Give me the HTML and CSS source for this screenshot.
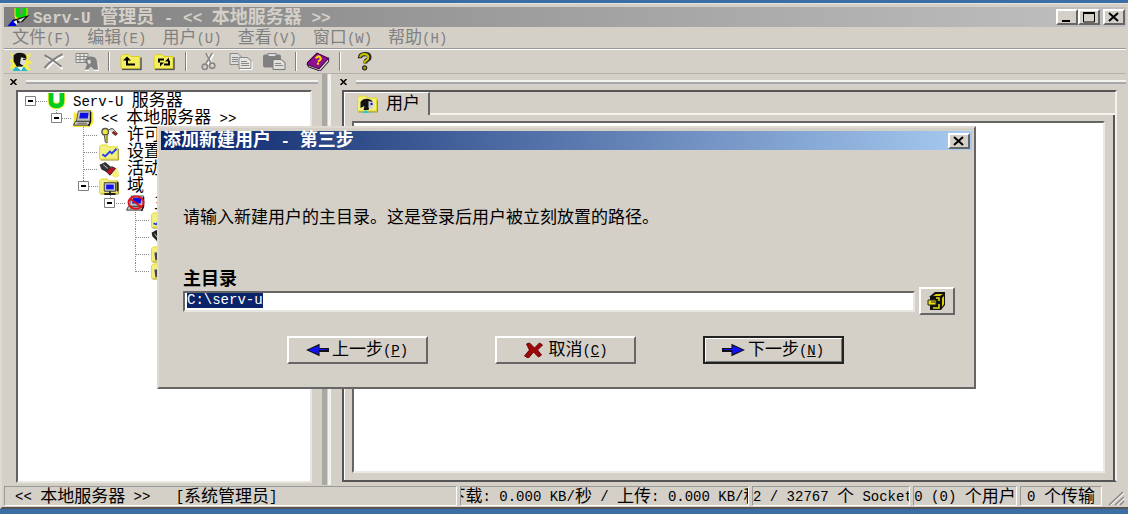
FILE: index.html
```html
<!DOCTYPE html>
<html lang="zh-CN">
<head>
<meta charset="utf-8">
<title>Serv-U 管理员</title>
<link rel="stylesheet" href="styles.css">
</head>
<body>
<svg width="0" height="0" class="defs" aria-hidden="true">
  <symbol id="folder" viewBox="0 0 22 18"><path d="M1 16V4l2-2h6l2 2h9v12z" fill="#f4ee60" stroke="#d8d020"/><path d="M2 17h19V5" fill="none" stroke="#555" stroke-width="1.5"/></symbol>
  <symbol id="folder-flat" viewBox="0 0 22 18"><path d="M1 16V3l2-2h6l2 2h9v13z" fill="#f4f080" stroke="#e0d820"/><path d="M2 17h19V5" fill="none" stroke="#a09820"/></symbol>
  <symbol id="cross" viewBox="0 0 10 8"><path d="M1 0l8 8M9 0L1 8" stroke="#000" stroke-width="2"/></symbol>
  <symbol id="pc" viewBox="0 0 22 18"><path d="M6 1h13v11H4z" fill="#c0c0c0" stroke="#555"/><path d="M8 3h9l-1 6H7z" fill="#1010e0"/><path d="M3 12h16l-2 4H1z" fill="#d0d0c0" stroke="#333"/><path d="M19 2v10l-2 5" fill="none" stroke="#111" stroke-width="1.5"/><path d="M5 14h10" stroke="#555"/></symbol>
</svg>
<div class="window">
  <header class="titlebar">
    <svg class="app-icon" viewBox="0 0 22 18"><path d="M9 0v8q1 3 4 3t5-3V0" fill="none" stroke="#ee0" stroke-width="4"/><path d="M10 0v7q3 4 7 0V0" fill="none" stroke="#0d0" stroke-width="4"/><path d="M5 12l17-5-7 7-6 1z" fill="#111"/><path d="M10 12l8-3-5 5z" fill="#ddd"/><path d="M0 18l6-7 3 7z" fill="#00d"/><path d="M6 14l3-2 1 5z" fill="#fff"/></svg>
    <h1><span class="m">Serv-U </span>管理员<span class="m"> - &lt;&lt; </span>本地服务器<span class="m"> &gt;&gt;</span></h1>
    <div class="controls">
      <button class="cap" aria-label="最小化"><svg viewBox="0 0 18 12"><path d="M4 10h8" stroke="#000" stroke-width="2"/></svg></button>
      <button class="cap" aria-label="最大化"><svg viewBox="0 0 18 12"><path d="M3 2h12" stroke="#000" stroke-width="2"/><path d="M3.500 2v9h11V2" fill="none" stroke="#000"/></svg></button>
      <button class="cap cap-close" aria-label="关闭"><svg viewBox="0 0 18 12"><path d="M4 2l9 8M13 2l-9 8" stroke="#000" stroke-width="2"/></svg></button>
    </div>
  </header>
  <nav class="menu">
    <button>文件<span class="m">(F)</span></button>
    <button>编辑<span class="m">(E)</span></button>
    <button>用户<span class="m">(U)</span></button>
    <button>查看<span class="m">(V)</span></button>
    <button>窗口<span class="m">(W)</span></button>
    <button>帮助<span class="m">(H)</span></button>
  </nav>
  <div class="toolbar">
    <button aria-label="新建用户"><svg viewBox="0 0 22 18"><path d="M0 0l6 4 4-4 4 4 7-3-4 6 5 3-5 2 4 6-8-3-4 3-3-4-6 3 3-6-3-3 4-2z" fill="#f6ef40"/><path d="M4 3q3-3 8-2 5 1 4 6l-3 3-1 4H7L4 9z" fill="#111"/><path d="M11 5l4 1 1 4-3 3-3-2z" fill="#ddd"/><path d="M13 7h2M10 13h3" stroke="#111"/><path d="M3 18l3-4 4 2 4-2 3 4z" fill="#20b8c8"/><path d="M8 14l3 4 2-4z" fill="#fff"/></svg></button>
    <button aria-label="删除"><svg viewBox="0 0 22 18"><path d="M3 4q8 4 15 11M19 3Q9 7 3 15" fill="none" stroke="#fff" stroke-width="2" transform="translate(1 1)"/><path d="M2 3q8 4 16 11M19 2Q9 7 2 15" fill="none" stroke="#808080" stroke-width="2"/></svg></button>
    <button aria-label="复制用户"><svg viewBox="0 0 24 18"><path d="M1 1h12v9H1zM5 1v9M9 1v9M1 4h12M1 7h12" fill="#e8e6e0" stroke="#888"/><path d="M10 9q0-5 6-5 6 0 6 6l1 7h-4l-3-3-3 3h-3l2-5z" fill="#808080"/><path d="M12 8l3-1 1 3-2 2z" fill="#ddd"/><path d="M24 10v8h-5M14 18h-4" fill="none" stroke="#fff"/></svg></button>
    <i class="sep"></i>
    <button aria-label="上级"><svg viewBox="0 0 24 18"><use href="#folder" width="24" height="18"/><path d="M8 6v6h8" fill="none" stroke="#000" stroke-width="2"/><path d="M4 8l4-4 4 4z"/></svg></button>
    <button aria-label="刷新"><svg viewBox="0 0 24 18"><use href="#folder" width="24" height="18"/><path d="M7 10V7h5M17 8v4h-5" fill="none" stroke="#000" stroke-width="2"/><path d="M13 9l4-4v4zM12 10l-4 4v-4z"/></svg></button>
    <i class="sep"></i>
    <button aria-label="剪切"><svg viewBox="0 0 22 18"><path d="M10 2l5 10M16 2l-6 10" fill="none" stroke="#fff" stroke-width="2"/><path d="M9 1l5 10M15 1L9 11" fill="none" stroke="#888" stroke-width="1.500"/><circle cx="8" cy="14" r="2.500" fill="none" stroke="#888" stroke-width="1.500"/><circle cx="15" cy="13" r="2.500" fill="none" stroke="#888" stroke-width="1.500"/></svg></button>
    <button aria-label="复制"><svg viewBox="0 0 24 18"><path d="M1 1h8l3 3v8H1z" fill="#ddd" stroke="#888"/><path d="M3 5h6M3 7h6M3 9h6" stroke="#888"/><path d="M10 5h8l4 3v8H10z" fill="#e6e4de" stroke="#888"/><path d="M12 9h6M12 11h8M12 13h8" stroke="#888"/><path d="M23 9v8H11" fill="none" stroke="#fff"/></svg></button>
    <button aria-label="粘贴"><svg viewBox="0 0 24 18"><rect x="1" y="2" width="18" height="13" rx="2" fill="#808080"/><path d="M6 4V1h8v3z" fill="#ddd" stroke="#808080"/><path d="M11 7h8l4 3v7H11z" fill="#e0ded8" stroke="#777"/><path d="M13 11h6M13 13h8" stroke="#888"/></svg></button>
    <i class="sep"></i>
    <button aria-label="帮助主题"><svg viewBox="0 0 22 18"><path d="M1 10l9-9 11 5-9 10-11-4z" fill="#901090" stroke="#400040"/><path d="M1 12l11 4 9-10v3l-8 9-11-4z" fill="#eee" stroke="#402040"/><path d="M9 6q2-3 4-1t-2 4" fill="none" stroke="#fd0" stroke-width="2"/><path d="M10 11h2" stroke="#fd0" stroke-width="2"/></svg></button>
    <i class="sep"></i>
    <button aria-label="关于"><svg viewBox="0 0 22 18"><path d="M9 6q0-4 5-4 4 0 4 3 0 2-3 3-1 1-1 3" fill="none" stroke="#222" stroke-width="4"/><path d="M9 5q1-3 4-3 4 0 4 3 0 2-2 3-2 1-2 3" fill="none" stroke="#c8c000" stroke-width="2"/><circle cx="13.500" cy="15" r="2" fill="#a09800" stroke="#222"/></svg></button>
  </div>
  <main class="panes">
    <section class="pane pane-left">
      <div class="grip-head"><button aria-label="关闭面板"><svg viewBox="0 0 10 8"><use href="#cross"/></svg></button><i></i></div>
      <ul class="tree">
        <li><svg class="g1" viewBox="0 0 27 17"><path d="M16 8.500h11" class="dots"/><path d="M5.500 3.500h10v9h-10z" class="box"/><path d="M8 8h5" class="dash"/></svg><svg class="u" viewBox="0 0 19 17"><path d="M4 0v8q0 5 5.500 5T15 8V0" fill="none" stroke="#ee2" stroke-width="6"/><path d="M4 0v8q0 5 5.500 5T15 8V0" fill="none" stroke="#0c2" stroke-width="4.500"/></svg><span><span class="m">Serv-U </span>服务器</span></li>
        <li><svg class="g2" viewBox="0 0 52 17"><path d="M36.500 0v4M42 8.500h10" class="dots"/><path d="M31.500 3.500h10v9h-10z" class="box"/><path d="M34 8h5" class="dash"/></svg><svg class="ico" viewBox="0 0 22 18"><path d="M1 2l4 2 3-4h12l2 3v11l-4 4H0l1-6z" fill="#f4e840"/><use href="#pc"/></svg><span><span class="m">&lt;&lt; </span>本地服务器<span class="m"> &gt;&gt;</span></span></li>
        <li><svg class="g3" viewBox="0 0 78 17"><path d="M63.500 0v17M64 8.500h14" class="dots"/></svg><svg class="ico" viewBox="0 0 22 18"><circle cx="7" cy="5" r="3.500" fill="#eee840" stroke="#555" stroke-width="1.500"/><path d="M6 8h3v9l-2-1z" fill="#d8d020" stroke="#555"/><path d="M11 3q4-3 6 1l3 3-2 2-4-3" fill="#ddd" stroke="#333"/><path d="M15 5l4 3" stroke="#a00" stroke-width="2"/></svg><span>许可</span></li>
        <li><svg class="g3" viewBox="0 0 78 17"><path d="M63.500 0v17M64 8.500h14" class="dots"/></svg><svg class="ico" viewBox="0 0 22 18"><use href="#folder-flat"/><path d="M4 11l3 2 5-5 2 2 5-5" fill="none" stroke="#24e" stroke-width="2"/></svg><span>设置</span></li>
        <li><svg class="g3" viewBox="0 0 78 17"><path d="M63.500 0v17M64 8.500h14" class="dots"/></svg><svg class="ico" viewBox="0 0 22 18"><path d="M13 15l7-8 2 9-4 2z" fill="#f6ef80"/><path d="M1 4l6-3 6 5-4 6-6-3z" fill="#333"/><path d="M5 4l5 4" stroke="#ccc"/><path d="M8 11l6-5 4 2-6 7z" fill="#c01020" stroke="#222"/></svg><span>活动</span></li>
        <li><svg class="g3" viewBox="0 0 78 17"><path d="M63.500 0v4M69 8.500h9" class="dots"/><path d="M58.500 3.500h10v9h-10z" class="box"/><path d="M61 8h5" class="dash"/></svg><svg class="ico" viewBox="0 0 22 18"><use href="#folder-flat"/><path d="M6 5h12v9H6z" fill="#c8c8c8" stroke="#333"/><path d="M8 7h8v5H8z" fill="#11e"/><path d="M12 14v3M6 17h12M20 4v10" stroke="#222" stroke-width="2"/></svg><span>域</span></li>
        <li><svg class="g4" viewBox="0 0 105 17"><path d="M90.500 0v4M96 8.500h9" class="dots"/><path d="M84.500 3.500h10v9h-10z" class="box"/><path d="M87 8h5" class="dash"/></svg><svg class="ico" viewBox="0 0 22 18"><use href="#pc"/><ellipse cx="11" cy="8" rx="8" ry="6.500" fill="none" stroke="#e01020" stroke-width="2"/><path d="M5 4l12 9" stroke="#e01020" stroke-width="2"/></svg><span>主</span></li>
        <li><svg class="g5" viewBox="0 0 130 17"><path d="M115.500 0v17M116 8.500h14" class="dots"/></svg><svg class="ico" viewBox="0 0 22 18"><use href="#folder-flat"/><path d="M3 12l3 1 6-6" fill="none" stroke="#24e" stroke-width="2"/></svg></li>
        <li><svg class="g5" viewBox="0 0 130 17"><path d="M115.500 0v17M116 8.500h14" class="dots"/></svg><svg class="ico" viewBox="0 0 22 18"><path d="M1 4l5-3 8 4v8l-6 3-2-4-4-4z" fill="#222"/><path d="M4 5l4 5" stroke="#ccc"/></svg></li>
        <li><svg class="g5" viewBox="0 0 130 17"><path d="M115.500 0v17M116 8.500h14" class="dots"/></svg><svg class="ico" viewBox="0 0 22 18"><use href="#folder-flat"/><path d="M4 7h10v8H5z" fill="#445"/></svg></li>
        <li><svg class="g5" viewBox="0 0 130 17"><path d="M115.500 0v9M116 8.500h14" class="dots"/></svg><svg class="ico" viewBox="0 0 22 18"><use href="#folder-flat"/><path d="M4 7h10v8H5z" fill="#445"/></svg></li>
      </ul>
    </section>
    <div class="splitter"></div>
    <section class="pane pane-right">
      <div class="grip-head"><button aria-label="关闭面板"><svg viewBox="0 0 10 8"><use href="#cross"/></svg></button><i></i></div>
      <div class="frame">
        <div class="tabs">
          <button class="tab"><svg class="ico" viewBox="0 0 22 18"><use href="#folder-flat"/><path d="M4 7q3-4 8-3 5 1 4 5l-3 3-1 3H7l1-4-4 2z" fill="#111"/><path d="M12 6l4 1 2 3-2 1v3l-4-1z" fill="#ccd"/><path d="M14 9h2" stroke="#11c" stroke-width="2"/><path d="M6 18l3-3 4 3z" fill="#2cc"/></svg>用户</button>
          <i class="tabs-rest"></i>
        </div>
        <div class="tab-page"><div class="list"></div></div>
      </div>
    </section>
  </main>
  <footer class="status">
    <div class="cell cell-main"><span class="m">&lt;&lt; </span>本地服务器<span class="m"> &gt;&gt;   [</span>系统管理员<span class="m">]</span></div>
    <div class="cell cell-speed">下载<span class="m">: 0.000 KB/</span>秒<span class="m"> / </span>上传<span class="m">: 0.000 KB/</span>秒</div>
    <div class="cell cell-socket"><span class="m">2 / 32767 </span>个<span class="m"> Socket</span></div>
    <div class="cell cell-users"><span class="m">0 (0) </span>个用户</div>
    <div class="cell cell-transfer"><span class="m">0 </span>个传输</div>
    <svg class="resize" viewBox="0 0 18 16"><path d="M1 15L15 2M7 15l9-8M12 15l4-4" stroke="#888" stroke-width="1.500"/><path d="M3 15L16 3M9 15l8-7" stroke="#fff"/></svg>
  </footer>
</div>
<form class="dialog" role="dialog" aria-labelledby="dialog-title">
  <header class="dialog-title">
    <h2 id="dialog-title">添加新建用户<span class="m"> - </span>第三步</h2>
    <button type="button" class="cap" aria-label="关闭"><svg viewBox="0 0 18 12"><path d="M4 2l9 8M13 2l-9 8" stroke="#000" stroke-width="2"/></svg></button>
  </header>
  <div class="dialog-body">
    <p>请输入新建用户的主目录。这是登录后用户被立刻放置的路径。</p>
    <label for="home">主目录</label>
    <div class="field">
      <input id="home" type="text" value="C:\serv-u" spellcheck="false">
      <button type="button" class="push browse" aria-label="浏览"><svg viewBox="0 0 20 18"><path d="M2 5l6-5h10v13l-4 5H3V5z" fill="#111"/><path d="M6 4l3-2h7l-3 2zM15 6l2-2v8l-2 3z" fill="#d8d010"/><path d="M1 8h8v5H1z" fill="#e8e010" stroke="#222"/><path d="M4 10h4" stroke="#222"/><path d="M9 6h3v3M6 16h6v-4" stroke="#e8e010" stroke-width="1.500" fill="none"/></svg></button>
    </div>
    <div class="actions">
      <button type="button" class="push"><svg viewBox="0 0 22 14"><path d="M0 7l13-6v4h9v4h-9v4z" fill="#111"/><path d="M2 7l10-4v8zM12 6h8v1h-8z" fill="#11f"/></svg><span>上一步<span class="m">(<u>P</u>)</span></span></button>
      <button type="button" class="push"><svg viewBox="0 0 22 16"><path d="M4 2l3-1 5 5 5-5 3 2-5 5 4 5-3 2-5-5-5 6-4-2 5-6z" fill="#a00808" stroke="#600"/></svg><span>取消<span class="m">(<u>C</u>)</span></span></button>
      <button type="submit" class="push default"><svg viewBox="0 0 22 14"><path d="M22 7L9 1v4H0v4h9v4z" fill="#111"/><path d="M20 7L10 3v8zM10 6H2v1h8z" fill="#11f"/></svg><span>下一步<span class="m">(<u>N</u>)</span></span></button>
    </div>
  </div>
</form>
<script src="app.js"></script>
</body>
</html>
```
FILE: styles.css
```css
* { box-sizing: border-box; }
:root {
  --face: #d4d0c8;
  --light: #f4f2ec;
  --shade: #808080;
  --dark: #555;
}
body {
  margin: 0;
  min-height: 100vh;
  display: flex;
  flex-direction: column;
  padding: 3px 0 5px;
  background: #3a6ea5;
  color: #000;
  font: 17px/17px "Liberation Mono", "Noto Sans CJK SC", monospace;
  overflow: hidden;
}
.defs { position: absolute; }
svg { display: block; flex: none; }
button {
  font: inherit;
  color: inherit;
  margin: 0;
  padding: 0;
  border: 0;
  background: none;
}
.m { font-size: 14px; white-space: pre; }
h1, h2, p { margin: 0; white-space: nowrap; }
h1, h2 { font-size: 18px; line-height: 18px; }
h1 .m, h2 .m { font-size: 16px; }
p { font-size: 17px; }

.window {
  flex: 1;
  display: flex;
  flex-direction: column;
  background: var(--face);
  border-top: 1px solid #e8e4dc;
  border-left: 2px solid #dedad2;
  border-bottom: 2px solid var(--dark);
  padding: 3px 2px 0 2px;
}
.titlebar {
  display: flex;
  align-items: center;
  height: 20px;
  padding: 0 1px 0 3px;
  background: linear-gradient(90deg, #808080, #c0c0c0);
  color: var(--face);
}
.titlebar h1 { padding-top: 3px; }
.app-icon { width: 23px; height: 18px; margin-right: 3px; }
.controls { display: flex; margin-left: auto; }
.cap {
  width: 22px;
  height: 16px;
  background: var(--face);
  border: 2px solid;
  border-color: #fff #666 #666 #fff;
}
.cap svg { width: 18px; height: 12px; }
.cap-close { margin-left: 3px; }

.menu {
  display: flex;
  gap: 16px;
  height: 22px;
  padding: 2px 8px 0;
  align-items: center;
  color: var(--shade);
  border-bottom: 1px solid #999;
}
.toolbar {
  display: flex;
  align-items: center;
  gap: 9px;
  height: 25px;
  padding: 0 5px;
  border-top: 1px solid #fff;
  border-bottom: 1px solid #b4b1aa;
}
.toolbar svg { width: 24px; height: 19px; }
.sep { width: 2px; height: 19px; border-left: 1px solid var(--shade); border-right: 1px solid #fff; }

.panes { flex: 1; display: flex; }
.pane { display: flex; flex-direction: column; }
.pane-left { width: 314px; }
.pane-right { flex: 1; }
.splitter { width: 12px; margin-left: 4px; border-left: 5px solid #aaa8a4; border-right: 3px solid var(--face); background: linear-gradient(90deg, var(--face) 1px, var(--light) 1px); }
.grip-head { display: flex; align-items: center; gap: 8px; height: 16px; padding-left: 5px; }
.grip-head svg { width: 9px; height: 6px; }
.grip-head i { flex: 1; height: 4px; border-top: 2px solid var(--light); border-bottom: 2px solid #a8a8ac; }
.tree {
  flex: 1;
  margin: 0 6px 2px 12px;
  padding: 1px 0 0 2px;
  list-style: none;
  background: #fff;
  border: 2px solid;
  border-color: #606060 #e8e6e0 #e8e6e0 #606060;
}
.tree li { display: flex; height: 17px; align-items: center; white-space: nowrap; }
.tree .g1, .tree .g2, .tree .g3, .tree .g4, .tree .g5 { height: 17px; }
.g1 { width: 27px; }
.g2 { width: 52px; }
.g3 { width: 78px; }
.g4 { width: 105px; }
.g5 { width: 130px; }
.dots { stroke: #888; stroke-dasharray: 1 1; fill: none; }
.box { stroke: #808080; fill: #fff; }
.dash { stroke: #000; stroke-width: 2; }
.u { width: 19px; height: 17px; margin-right: 7px; }
.ico { width: 22px; height: 17px; margin-right: 7px; }

.frame {
  flex: 1;
  display: flex;
  flex-direction: column;
  margin: 0 9px 3px 8px;
  border: 2px solid;
  border-color: #555 #f4f2ec #555 #555;
}
.tabs { display: flex; height: 23px; }
.tab {
  display: flex;
  align-items: center;
  width: 86px;
  padding-left: 11px;
  border-top: 1px solid #fff;
  border-left: 1px solid #fff;
  border-right: 2px solid #666;
}
.tab .ico { width: 23px; height: 18px; }
.tabs-rest { flex: 1; border-bottom: 2px solid var(--light); }
.tab-page {
  flex: 1;
  display: flex;
  padding: 6px 8px 7px 7px;
  border-left: 1px solid #fff;
  border-right: 2px solid #555;
}
.list {
  flex: 1;
  background: #fff;
  border: 2px solid;
  border-color: #666 #ebe9e3 #ebe9e3 #666;
}

.status { display: flex; gap: 3px; height: 22px; padding: 1px 0; }
.cell {
  display: flex;
  align-items: center;
  justify-content: center;
  overflow: hidden;
  padding-top: 2px;
  white-space: nowrap;
  border: 1px solid;
  border-color: #999 #fff #fff #999;
}
.cell-main { flex: 1; justify-content: flex-start; padding-left: 10px; }
.cell-speed { width: 289px; }
.cell-socket { width: 158px; justify-content: flex-start; }
.cell-users { width: 104px; }
.cell-transfer { width: 82px; }
.resize { width: 18px; height: 16px; align-self: flex-end; margin-left: 3px; }

.dialog {
  position: absolute;
  top: 126px;
  left: 157px;
  right: 152px;
  padding: 3px 2px 23px 2px;
  background: var(--face);
  border: 2px solid;
  border-color: #dedad2 #666 #666 #dedad2;
}
.dialog-title {
  display: flex;
  align-items: center;
  justify-content: space-between;
  height: 19px;
  padding: 0 2px;
  color: #fff;
  background: linear-gradient(90deg, #0a246a, #a6caf0);
}
.dialog-title h2 { padding-top: 2px; }
.dialog-body { display: flex; flex-direction: column; padding: 60px 17px 0 22px; }
.dialog p { line-height: 18px; }
.dialog label { margin-top: 45px; font-size: 18px; font-weight: bold; line-height: 14px; align-self: flex-start; }
.field { display: flex; align-items: center; gap: 4px; }
.field input {
  flex: 1;
  min-width: 0;
  height: 21px;
  margin: 0;
  padding: 0 2px 2px;
  font: 14px/15px "Liberation Mono", monospace;
  background: #fff;
  border: 2px solid;
  border-color: #666 #e8e6e0 #e8e6e0 #666;
  border-radius: 0;
  outline: 0;
}
.field input::selection { background: #0a246a; color: #fff; }
.push {
  display: flex;
  align-items: center;
  justify-content: center;
  gap: 3px;
  height: 28px;
  background: var(--face);
  border: 2px solid;
  border-color: #fff #666 #666 #fff;
}
.browse { width: 36px; }
.browse svg { width: 20px; height: 18px; }
.actions { display: flex; justify-content: center; gap: 67px; margin-top: 21px; padding-right: 8px; }
.actions .push { width: 141px; white-space: nowrap; }
.actions .push > span { padding-top: 2px; }
.actions svg { width: 23px; height: 16px; }
.push.default { border-color: #222; box-shadow: inset 1px 1px #fff, inset -1px -1px #777; }
```
FILE: app.js
```js
const home = document.getElementById('home');
home.focus();
home.select();
```
